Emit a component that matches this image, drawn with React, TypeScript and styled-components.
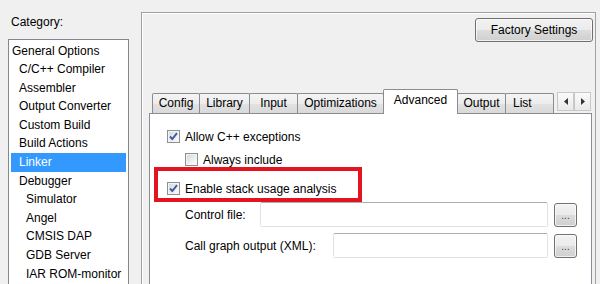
import React from 'react';
import styled, { createGlobalStyle } from 'styled-components';

const GlobalStyle = createGlobalStyle`
  html, body {
    margin: 0;
    padding: 0;
    background: #f0f0f0;
  }
  body {
    font-family: "Liberation Sans", Arial, sans-serif;
    font-size: 12px;
    color: #000;
  }
`;

const categories = [
  { label: 'General Options', level: 0 },
  { label: 'C/C++ Compiler', level: 1 },
  { label: 'Assembler', level: 1 },
  { label: 'Output Converter', level: 1 },
  { label: 'Custom Build', level: 1 },
  { label: 'Build Actions', level: 1 },
  { label: 'Linker', level: 1, selected: true },
  { label: 'Debugger', level: 1 },
  { label: 'Simulator', level: 2 },
  { label: 'Angel', level: 2 },
  { label: 'CMSIS DAP', level: 2 },
  { label: 'GDB Server', level: 2 },
  { label: 'IAR ROM-monitor', level: 2 },
];

const tabs = [
  { label: 'Config', width: 48 },
  { label: 'Library', width: 51 },
  { label: 'Input', width: 49 },
  { label: 'Optimizations', width: 87 },
  { label: 'Advanced', width: 75, active: true },
  { label: 'Output', width: 49 },
  { label: 'List', width: 49, left: true },
];

export default function App() {
  return (
    <>
      <GlobalStyle />
      <Page>
        <Sidebar>
          <CategoryLabel>Category:</CategoryLabel>
          <TreeList>
            {categories.map((c) => (
              <TreeItem key={c.label} $level={c.level} $selected={!!c.selected}>
                {c.label}
              </TreeItem>
            ))}
          </TreeList>
        </Sidebar>

        <OptionsPanel>
          <ButtonBar>
            <PushButton>Factory Settings</PushButton>
          </ButtonBar>

          <TabStrip>
            {tabs.map((t) => (
              <Tab key={t.label} $width={t.width} $active={!!t.active} $left={!!t.left}>
                {t.label}
              </Tab>
            ))}
            <ScrollArrows>
              <ArrowButton>
                <svg width="4" height="7" viewBox="0 0 4 7">
                  <path d="M4 0 L0 3.5 L4 7 Z" fill="#333" />
                </svg>
              </ArrowButton>
              <ArrowButton>
                <svg width="4" height="7" viewBox="0 0 4 7">
                  <path d="M0 0 L4 3.5 L0 7 Z" fill="#333" />
                </svg>
              </ArrowButton>
            </ScrollArrows>
          </TabStrip>

          <TabPane>
            <CheckRow $indent={17} $gap={0}>
              <CheckBox checked />
              <span>Allow C++ exceptions</span>
            </CheckRow>
            <CheckRow $indent={35} $gap={4}>
              <CheckBox />
              <span>Always include</span>
            </CheckRow>
            <CheckRow $indent={17} $gap={10}>
              <CheckBox checked />
              <span>Enable stack usage analysis</span>
              <Highlight />
            </CheckRow>
            <FieldRow $gap={4}>
              <FieldLabel $width={75}>Control file:</FieldLabel>
              <TextBox />
              <BrowseButton>...</BrowseButton>
            </FieldRow>
            <FieldRow $gap={6}>
              <FieldLabel $width={148}>Call graph output (XML):</FieldLabel>
              <TextBox />
              <BrowseButton>...</BrowseButton>
            </FieldRow>
          </TabPane>
        </OptionsPanel>
      </Page>
    </>
  );
}

function CheckBox({ checked }: { checked?: boolean }) {
  return (
    <Box>
      {checked && (
        <svg width="11" height="11" viewBox="0 0 11 11">
          <path d="M2 5.5 L4.3 8 L9 2.2" fill="none" stroke="#4258a0" strokeWidth="1.9" />
        </svg>
      )}
    </Box>
  );
}

const Page = styled.div`
  display: flex;
  width: 600px;
  height: 284px;
  overflow: hidden;
`;

const Sidebar = styled.div`
  width: 141px;
  flex-shrink: 0;
  padding: 15px 0 0 8px;
  box-sizing: border-box;
`;

const CategoryLabel = styled.div`
  height: 15px;
  line-height: 15px;
  padding-left: 3px;
  margin-bottom: 9px;
`;

const TreeList = styled.div`
  width: 121px;
  height: 260px;
  box-sizing: border-box;
  background: #fff;
  border: 1px solid #828790;
  padding: 1.5px 1px;
`;

const TreeItem = styled.div<{ $level: number; $selected: boolean }>`
  height: 18.6px;
  line-height: 18.6px;
  margin: 0 1px;
  padding-left: ${(p) => 1 + p.$level * 7}px;
  white-space: nowrap;
  background: ${(p) => (p.$selected ? '#3399ff' : 'transparent')};
  color: ${(p) => (p.$selected ? '#fff' : '#000')};
`;

const OptionsPanel = styled.div`
  width: 455px;
  height: 300px;
  margin-top: 12px;
  box-sizing: border-box;
  border: 1px solid #a0a0a0;
  box-shadow: inset 1px 1px 0 #fff;
  display: flex;
  flex-direction: column;
`;

const ButtonBar = styled.div`
  display: flex;
  justify-content: flex-end;
  padding: 5px 2px 0 0;
`;

const PushButton = styled.div`
  width: 118px;
  height: 24px;
  box-sizing: border-box;
  border: 1px solid #707070;
  border-radius: 3px;
  background: linear-gradient(#f2f2f2 0%, #ebebeb 50%, #dddddd 50%, #cfcfcf 100%);
  box-shadow: inset 0 0 0 1px rgba(255, 255, 255, 0.7);
  display: flex;
  align-items: center;
  justify-content: center;
`;

const TabStrip = styled.div`
  display: flex;
  align-items: flex-end;
  height: 24px;
  margin-top: 47px;
  padding-left: 10px;
  position: relative;
  z-index: 1;
`;

const Tab = styled.div<{ $width: number; $active: boolean; $left: boolean }>`
  width: ${(p) => p.$width}px;
  height: ${(p) => (p.$active ? 25 : 20)}px;
  margin-bottom: ${(p) => (p.$active ? -1 : 0)}px;
  box-sizing: border-box;
  border: 1px solid #898c95;
  border-bottom: none;
  border-radius: 2px 2px 0 0;
  background: ${(p) =>
    p.$active ? '#fff' : 'linear-gradient(#f5f5f5 0%, #ececec 50%, #e2e2e2 51%, #d9d9d9 100%)'};
  padding: 0 0 ${(p) => (p.$active ? 4 : 1)}px ${(p) => (p.$left ? 7 : 0)}px;
  display: flex;
  align-items: center;
  justify-content: ${(p) => (p.$left ? 'flex-start' : 'center')};
  white-space: nowrap;
  & + & {
    margin-left: -1px;
  }
`;

const ScrollArrows = styled.div`
  display: flex;
  margin: 0 0 2px 3px;
`;

const ArrowButton = styled.div`
  width: 17px;
  height: 19px;
  box-sizing: border-box;
  border: 1px solid #c8c8c8;
  background: linear-gradient(#fafafa, #e9e9e9);
  display: flex;
  align-items: center;
  justify-content: center;
`;

const TabPane = styled.div`
  flex: 1;
  margin: 0 3px 0 7px;
  background: #fff;
  border: 1px solid #898c95;
  padding: 13px 14px 0 0;
  display: flex;
  flex-direction: column;
`;

const CheckRow = styled.div<{ $indent: number; $gap: number }>`
  position: relative;
  height: 19px;
  margin-top: ${(p) => p.$gap}px;
  padding-left: ${(p) => p.$indent}px;
  display: flex;
  align-items: center;
  gap: 5px;
  white-space: nowrap;
`;

const Box = styled.span`
  width: 13px;
  height: 13px;
  box-sizing: border-box;
  border: 1px solid #8e8f8f;
  background: linear-gradient(135deg, #d2d5da 0%, #eef0f2 60%, #fbfbfb 100%);
  box-shadow: inset 0 0 0 1px #f4f4f4;
  display: flex;
  align-items: center;
  justify-content: center;
  flex-shrink: 0;
`;

const Highlight = styled.div`
  position: absolute;
  left: 4px;
  top: -12px;
  width: 208px;
  height: 35px;
  box-sizing: border-box;
  border: 4px solid #e3141f;
  pointer-events: none;
`;

const FieldRow = styled.div<{ $gap: number }>`
  display: flex;
  align-items: center;
  height: 25px;
  margin-top: ${(p) => p.$gap}px;
  padding-left: 35px;
  white-space: nowrap;
`;

const FieldLabel = styled.div<{ $width: number }>`
  width: ${(p) => p.$width}px;
  flex-shrink: 0;
`;

const TextBox = styled.div`
  flex: 1;
  height: 25px;
  box-sizing: border-box;
  border: 1px solid #dfe3e8;
  border-top-color: #abadb3;
  border-radius: 2px;
  background: #fff;
`;

const BrowseButton = styled.div`
  width: 23px;
  height: 24px;
  margin-left: 6px;
  box-sizing: border-box;
  border: 1px solid #707070;
  border-radius: 3px;
  background: linear-gradient(#f2f2f2 0%, #ebebeb 50%, #dddddd 50%, #cfcfcf 100%);
  box-shadow: inset 0 0 0 1px rgba(255, 255, 255, 0.7);
  font-size: 10px;
  color: #444;
  display: flex;
  align-items: flex-end;
  justify-content: center;
  padding-bottom: 5px;
  line-height: 10px;
`;
